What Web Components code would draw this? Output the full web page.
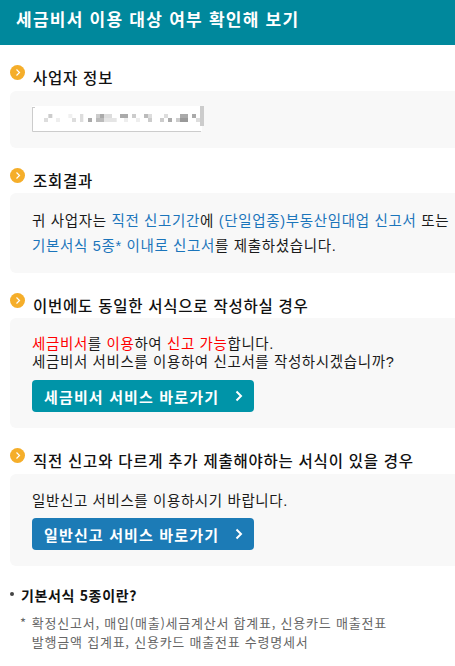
<!DOCTYPE html>
<html lang="ko">
<head>
<meta charset="utf-8">
<style>
html, body { margin: 0; padding: 0; background: #fff; overflow: hidden; }
body { width: 455px; height: 666px; font-family: "Noto Sans CJK KR", "Liberation Sans", sans-serif; }
.txt { font-family: "Liberation Sans", "Noto Sans CJK KR", sans-serif; font-size: 14.5px; letter-spacing: 0.62px; white-space: nowrap; color: #1a1a1a; }
.blue { color: #1b75bb; }
.red { color: #f00; }
</style>
</head>
<body>
<page-header>세금비서 이용 대상 여부 확인해 보기</page-header>

<info-section heading="사업자 정보" style="--head: 26px; --panel-pad: 15px 22px">
  <masked-field></masked-field>
</info-section>

<info-section heading="조회결과" style="--head: 25px; --panel-pad: 16px 0 14px 22px">
  <div class="txt" style="line-height:25px;letter-spacing:0.66px">귀 사업자는 <span class="blue">직전 신고기간</span>에 <span class="blue">(단일업종)부동산임대업 신고서</span> 또는<br><span class="blue">기본서식 5종* 이내로 신고서</span>를 제출하셨습니다.</div>
</info-section>

<info-section heading="이번에도 동일한 서식으로 작성하실 경우" style="--head: 25px; --panel-pad: 17px 22px 16px">
  <div class="txt" style="line-height:18px"><span class="red">세금비서</span>를 <span class="red">이용</span>하여 <span class="red">신고 가능</span>합니다.<br>세금비서 서비스를 이용하여 신고서를 작성하시겠습니까?</div>
  <go-button style="--btn: #0094a8; --gap: 9px">세금비서 서비스 바로가기</go-button>
</info-section>

<info-section heading="직전 신고와 다르게 추가 제출해야하는 서식이 있을 경우" style="--head: 26px; --panel-pad: 18px 22px 16px">
  <div class="txt" style="line-height:18px">일반신고 서비스를 이용하시기 바랍니다.</div>
  <go-button style="--btn: #1c7bb6; --gap: 8px">일반신고 서비스 바로가기</go-button>
</info-section>

<foot-note heading="기본서식 5종이란?">
  확정신고서, 매입(매출)세금계산서 합계표, 신용카드 매출전표<br>발행금액 집계표, 신용카드 매출전표 수령명세서
</foot-note>

<script>
class PageHeader extends HTMLElement {
  constructor() {
    super();
    this.attachShadow({ mode: "open" });
    this.shadowRoot.innerHTML = `
<style>
:host {
  display: flex;
  align-items: center;
  height: 45px;
  padding: 0 16px 8px;
  box-sizing: border-box;
  background: #00889c;
  color: #fff;
  font-size: 17px;
  font-weight: 700;
  letter-spacing: 1.25px;
}
</style>
<slot></slot>`;
  }
}

class InfoSection extends HTMLElement {
  constructor() {
    super();
    this.attachShadow({ mode: "open" });
    this.shadowRoot.innerHTML = `
<style>
:host {
  display: block;
  padding-top: 20px;
  padding-left: 10px;
}
.head {
  display: flex;
  align-items: flex-start;
  gap: 8px;
  height: var(--head, 26px);
}
.head svg { flex: none; }
h2 {
  margin: 2px 0 0;
  font-size: 15.5px;
  font-weight: 500;
  letter-spacing: 0.75px;
  line-height: 20px;
  color: #111;
  white-space: nowrap;
}
.panel {
  background: #f8f8f8;
  border-radius: 6px 0 0 6px;
  padding: var(--panel-pad, 15px 22px);
}
</style>
<div class="head">
  <svg width="15" height="15" viewBox="0 0 15 15">
    <circle cx="7.5" cy="7.5" r="7.5" fill="#f5ae2a"/>
    <path d="M6.5 4.5l3 3-3 3" fill="none" stroke="#fff" stroke-width="1.2"/>
  </svg>
  <h2></h2>
</div>
<div class="panel"><slot></slot></div>`;
  }
  connectedCallback() {
    this.shadowRoot.querySelector("h2").textContent = this.getAttribute("heading");
  }
}

// 가려진 사업자 정보 (모자이크)
class MaskedField extends HTMLElement {
  constructor() {
    super();
    this.attachShadow({ mode: "open" });
    const rowA = [[85, 12, "#ccc"], [145, 12, "#f0f0f0"], [180, 10, "#ddd"], [228, 12, "#ccc"], [240, 12, "#aaa"], [252, 24, "#ddd"], [300, 24, "#aaa"], [336, 12, "#ccc"], [372, 12, "#bbb"], [384, 12, "#ddd"], [432, 12, "#ddd"], [480, 24, "#aaa"], [516, 12, "#aaa"]];
    const rowB = [[72, 12, "#ddd"], [108, 12, "#eee"], [156, 12, "#ddd"], [180, 10, "#ddd"], [204, 12, "#aaa"], [228, 24, "#bbb"], [252, 38, "#e5e5e5"], [312, 12, "#eee"], [348, 12, "#eee"], [384, 12, "#ccc"], [420, 12, "#ccc"], [444, 12, "#aaa"], [468, 12, "#ccc"], [480, 24, "#999"], [528, 12, "#ddd"]];
    const cells = (row, y) => row
      .map(([z, w, c]) => `<rect x="${z / 3 - 12}" y="${y}" width="${w / 3}" height="4" fill="${c}"/>`)
      .join("");
    this.shadowRoot.innerHTML = `
<style>
:host {
  display: block;
  width: 172px;
  height: 27px;
}
svg { display: block; }
</style>
<svg width="172" height="27" viewBox="0 0 172 27">
  <rect x="0" y="0" width="170" height="25" fill="#fff"/>
  <path d="M.5 1V25.5H169" fill="none" stroke="#ccc"/>
  <path d="M0 1.5H3" stroke="#ccc"/>
  <rect x="168" y="0" width="4" height="20" fill="#ccc"/>
  ${cells(rowA, 8)}${cells(rowB, 12)}
</svg>`;
  }
}

class GoButton extends HTMLElement {
  constructor() {
    super();
    this.attachShadow({ mode: "open" });
    this.shadowRoot.innerHTML = `
<style>
:host {
  display: flex;
  align-items: center;
  width: 222px;
  height: 32px;
  margin-top: var(--gap, 10px);
  padding: 0 11px 0 12px;
  box-sizing: border-box;
  border-radius: 4px;
  background: var(--btn);
  color: #fff;
  font-size: 15px;
  font-weight: 700;
  letter-spacing: 1.15px;
  white-space: nowrap;
}
.label { flex: 1; }
svg { flex: none; }
</style>
<span class="label"><slot></slot></span>
<svg width="8" height="12" viewBox="0 0 8 12"><path d="M1.5 1.5l4.5 4.5-4.5 4.5" fill="none" stroke="#fff" stroke-width="2"/></svg>`;
  }
}

class FootNote extends HTMLElement {
  constructor() {
    super();
    this.attachShadow({ mode: "open" });
    this.shadowRoot.innerHTML = `
<style>
:host {
  display: block;
  padding: 19px 0 0 10px;
}
.title {
  display: flex;
  align-items: center;
  gap: 7px;
  font-size: 14px;
  font-weight: 700;
  letter-spacing: 0.65px;
  line-height: 20px;
  color: #111;
}
.dot { width: 4px; height: 4px; border-radius: 50%; background: #444; margin-bottom: 2px; }
.note {
  display: flex;
  gap: 5px;
  margin: 8px 0 0 10px;
  font-size: 13px;
  letter-spacing: 0.77px;
  line-height: 19px;
  color: #666;
  white-space: nowrap;
}
</style>
<div class="title"><span class="dot"></span><span id="t"></span></div>
<div class="note"><span>*</span><span><slot></slot></span></div>`;
  }
  connectedCallback() {
    this.shadowRoot.getElementById("t").textContent = this.getAttribute("heading");
  }
}

customElements.define("page-header", PageHeader);
customElements.define("info-section", InfoSection);
customElements.define("masked-field", MaskedField);
customElements.define("go-button", GoButton);
customElements.define("foot-note", FootNote);
</script>
</body>
</html>
